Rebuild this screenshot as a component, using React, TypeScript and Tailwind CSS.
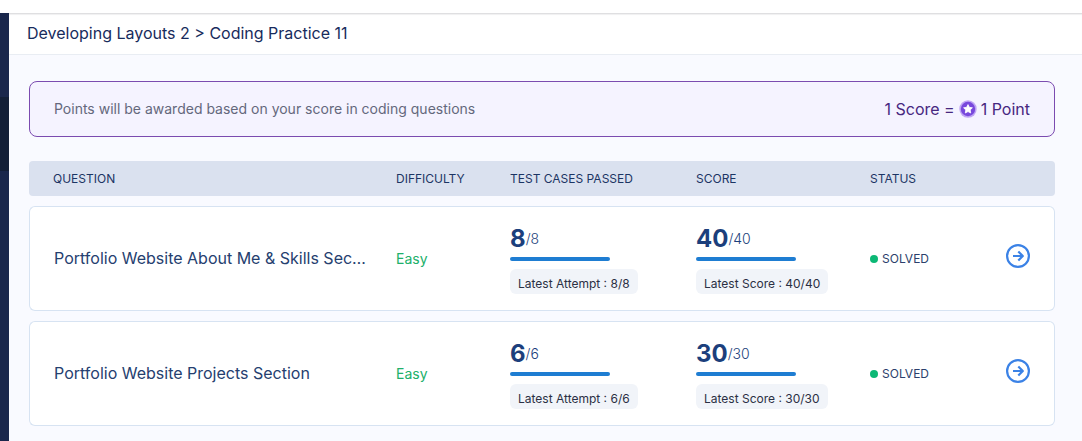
import React from 'react';

interface Question {
  id: number;
  title: string;
  difficulty: string;
  testCases: { passed: number; total: number };
  score: { earned: number; total: number };
  status: string;
}

const QUESTIONS: Question[] = [
  {
    id: 1,
    title: 'Portfolio Website About Me & Skills Section',
    difficulty: 'Easy',
    testCases: { passed: 8, total: 8 },
    score: { earned: 40, total: 40 },
    status: 'SOLVED',
  },
  {
    id: 2,
    title: 'Portfolio Website Projects Section',
    difficulty: 'Easy',
    testCases: { passed: 6, total: 6 },
    score: { earned: 30, total: 30 },
    status: 'SOLVED',
  },
];

const PointIcon: React.FC = () => (
  <svg viewBox="0 0 18 18" className="h-[18px] w-[18px]" aria-hidden="true">
    <circle cx="9" cy="9" r="8.7" fill="#bfa4f4" />
    <circle cx="9" cy="9" r="7.2" fill="#7848dc" />
    <path
      d="M9 4.6l1.35 2.75 3.05.45-2.2 2.15.5 3.05L9 11.55 6.3 13l.5-3.05-2.2-2.15 3.05-.45z"
      fill="#fff"
      stroke="#fff"
      strokeWidth="0.8"
      strokeLinejoin="round"
    />
  </svg>
);

const ArrowCircleIcon: React.FC = () => (
  <svg viewBox="0 0 24 24" className="h-6 w-6" fill="none" stroke="#3b82e6" strokeWidth="2.2" aria-hidden="true">
    <circle cx="12" cy="12" r="10.9" />
    <path d="M7 12h9.5M12.3 7.5l4.5 4.5-4.5 4.5" strokeLinejoin="round" />
  </svg>
);

interface ResultProps {
  label: string;
  value: number;
  total: number;
}

const Result: React.FC<ResultProps> = ({ label, value, total }) => (
  <div className="flex flex-col items-start">
    <p className="flex items-center pt-0.5 text-[#1c3f7c]">
      <span className="text-2xl leading-7 font-bold">{value}</span>
      <span className="text-sm leading-7 font-light">/{total}</span>
    </p>
    <div
      role="progressbar"
      aria-label={label}
      aria-valuenow={value}
      aria-valuemax={total}
      className="mt-1 h-1 w-[100px] overflow-hidden rounded-full bg-[#d7dfe9]"
    >
      <div className="h-full bg-[#1e7dd2]" style={{ width: `${(value / total) * 100}%` }} />
    </div>
    <p className="mt-2 rounded-md bg-[#f1f4f9] px-2 pt-1 text-xs leading-[21px] text-[#2b3044]">
      {label} : {value}/{total}
    </p>
  </div>
);

const QuestionRow: React.FC<{ question: Question }> = ({ question }) => {
  const cell = 'h-[105px] border-y border-[#d7e3f2] bg-white p-0 align-middle';

  return (
    <tr>
      <td className={`${cell} rounded-l-md border-l pr-7 pl-6`}>
        <p className="truncate pb-0.5 text-base text-[#25406f]">{question.title}</p>
      </td>
      <td className={`${cell} text-sm text-[#20b06a]`}>{question.difficulty}</td>
      <td className={cell}>
        <Result label="Latest Attempt" value={question.testCases.passed} total={question.testCases.total} />
      </td>
      <td className={cell}>
        <Result label="Latest Score" value={question.score.earned} total={question.score.total} />
      </td>
      <td className={cell}>
        <span className="flex items-center gap-1 text-xs text-[#2c3f6b]">
          <span className="h-2 w-2 rounded-full bg-[#0cb875]" />
          {question.status}
        </span>
      </td>
      <td className={`${cell} rounded-r-md border-r pr-6`}>
        <button type="button" aria-label={`Open ${question.title}`} className="mb-1.5 ml-auto block">
          <ArrowCircleIcon />
        </button>
      </td>
    </tr>
  );
};

const QuestionsTable: React.FC = () => (
  <table className="mt-[14px] w-full table-fixed border-separate border-spacing-x-0 border-spacing-y-[10px] text-left">
    <colgroup>
      <col />
      <col className="w-[114px]" />
      <col className="w-[186px]" />
      <col className="w-[174px]" />
      <col className="w-[100px]" />
      <col className="w-[85px]" />
    </colgroup>
    <thead>
      <tr className="h-[35px] text-xs text-[#1c3564] [&>th]:bg-[#dae1ef] [&>th]:p-0 [&>th]:font-normal">
        <th scope="col" className="rounded-l"><span className="pl-6">QUESTION</span></th>
        <th scope="col">DIFFICULTY</th>
        <th scope="col">TEST CASES PASSED</th>
        <th scope="col">SCORE</th>
        <th scope="col">STATUS</th>
        <td className="rounded-r bg-[#dae1ef]" />
      </tr>
    </thead>
    <tbody>
      {QUESTIONS.map((question) => (
        <QuestionRow key={question.id} question={question} />
      ))}
    </tbody>
  </table>
);

export default function App() {
  return (
    <div className="flex min-h-screen flex-col bg-white pt-[13px] font-['Inter',sans-serif]">
      <div className="flex flex-1">
        <aside className="flex w-[9px] shrink-0 flex-col bg-[#1a274c]">
          <div className="mt-[84px] h-[74px] bg-[#131f37]" />
        </aside>
        <div className="flex min-w-0 flex-1 flex-col bg-[#f9faff]">
          <header className="border-t border-b border-t-[#dfdfe1] border-b-[#e9edf3] bg-white px-[18px] pt-[7px] pb-[9px] shadow-[inset_0_1px_1px_#f0f0f1]">
            <h1 className="text-base text-[#172b5c]">Developing Layouts 2 &gt; Coding Practice 11</h1>
          </header>
          <main className="pt-[26px] pr-[27px] pl-5">
            <section className="flex h-14 items-center justify-between rounded-lg border border-[#7b4bb0] bg-[#f5f3ff] px-6">
              <p className="text-sm text-[#64687c]">Points will be awarded based on your score in coding questions</p>
              <p className="flex items-center gap-1 text-base text-[#47277f]">
                1 Score = <PointIcon /> 1 Point
              </p>
            </section>
            <QuestionsTable />
          </main>
        </div>
      </div>
    </div>
  );
}
